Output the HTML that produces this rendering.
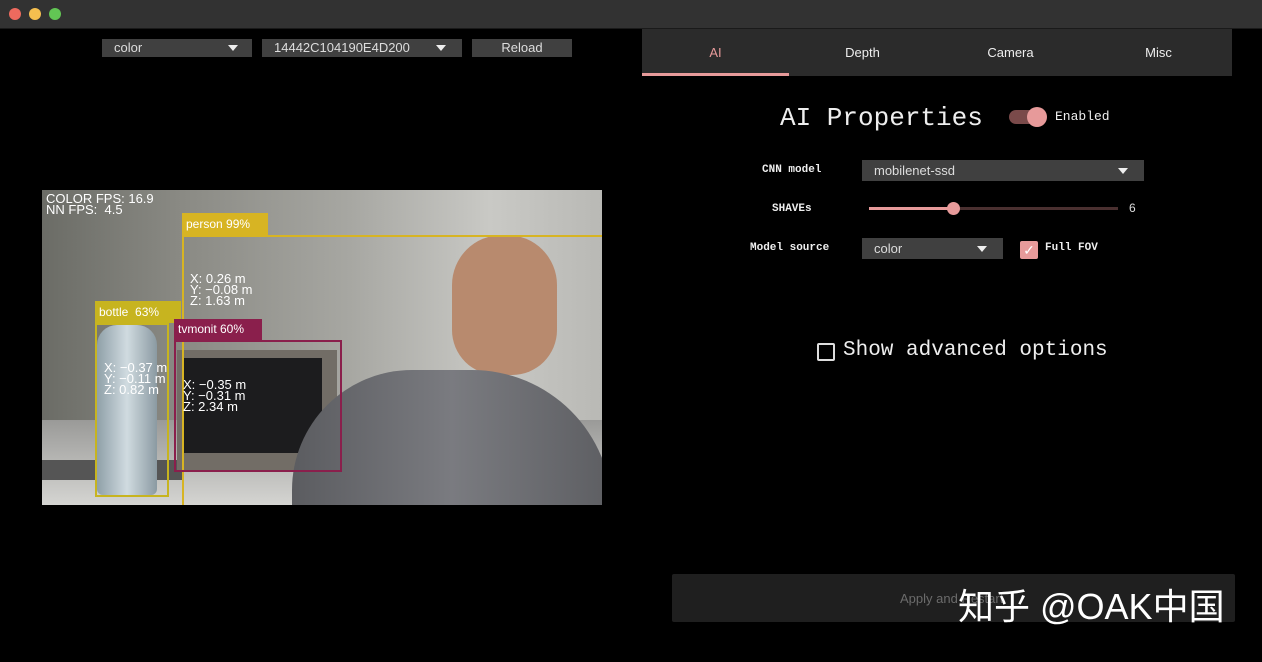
<!DOCTYPE html>
<html><head><meta charset="utf-8"><style>
body{margin:0;width:1262px;height:662px;background:#000;overflow:hidden;position:relative;font-family:"Liberation Sans",sans-serif}
.abs{position:absolute}
.tb{left:0;top:0;width:1262px;height:28px;background:#323232;border-bottom:1px solid #1a1a1a}
.dot{top:8px;width:12px;height:12px;border-radius:50%}
.sel{background:#404040;color:#ddd;font-size:13px;line-height:18px;padding-left:12px;box-sizing:border-box}
.tri{position:absolute;width:0;height:0;border-left:5px solid transparent;border-right:5px solid transparent;border-top:6px solid #eee;top:6px}
.mono{font-family:"Liberation Mono",monospace;color:#eee}
.lbl{font-family:"Liberation Mono",monospace;font-weight:bold;font-size:11px;color:#eee}
.ov{font-family:"Liberation Sans",sans-serif;font-size:13px;color:#fff;line-height:11px}
</style></head><body>
<div class="abs tb"></div>
<div class="abs dot" style="left:9px;background:#ed6a5e"></div>
<div class="abs dot" style="left:29px;background:#f5bf4f"></div>
<div class="abs dot" style="left:49px;background:#62c554"></div>

<div class="abs sel" style="left:102px;top:39px;width:150px;height:18px">color<span class="tri" style="left:126px"></span></div>
<div class="abs sel" style="left:262px;top:39px;width:200px;height:18px">14442C104190E4D200<span class="tri" style="left:174px"></span></div>
<div class="abs sel" style="left:472px;top:39px;width:100px;height:18px;text-align:center;padding:0">Reload</div>

<div class="abs" style="left:42px;top:190px;width:560px;height:315px;overflow:hidden;background:linear-gradient(90deg,#6b6c66 0%,#8a8a84 25%,#a7a7a2 55%,#c9c9c5 80%,#b9b9b5 100%)">
 <div class="abs" style="left:0;top:230px;width:560px;height:85px;background:linear-gradient(#9a9a98,#d5d5d2)"></div>
 <div class="abs" style="left:0;top:270px;width:140px;height:20px;background:#555"></div>
 <div class="abs" style="left:135px;top:160px;width:160px;height:120px;background:#726d66"></div>
 <div class="abs" style="left:140px;top:168px;width:140px;height:95px;background:#1c1c1e"></div>
 <div class="abs" style="left:55px;top:135px;width:60px;height:170px;border-radius:20px 20px 6px 6px;background:linear-gradient(90deg,#8fa0a8,#d0dbe0,#8b9aa2)"></div>
 <div class="abs" style="left:410px;top:45px;width:105px;height:140px;border-radius:50px 50px 45px 45px;background:#b88a6e"></div>
 <div class="abs" style="left:250px;top:180px;width:320px;height:150px;border-radius:120px 140px 0 0;background:linear-gradient(90deg,#5b5c60,#7a7b80,#5d5e62)"></div>
 <div class="abs" style="left:140px;top:45px;width:418px;height:268px;border:2px solid #d7b423"></div>
 <div class="abs" style="left:140px;top:23px;width:86px;height:22px;background:#d7b423;color:#fff;font-size:12px;line-height:22px;padding-left:4px;box-sizing:border-box">person 99%</div>
 <div class="abs" style="left:53px;top:133px;width:70px;height:170px;border:2px solid #c7b41f"></div>
 <div class="abs" style="left:53px;top:111px;width:86px;height:22px;background:#c7b41f;color:#fff;font-size:12px;line-height:22px;padding-left:4px;box-sizing:border-box">bottle &nbsp;63%</div>
 <div class="abs" style="left:132px;top:150px;width:164px;height:128px;border:2px solid #8a1f4c"></div>
 <div class="abs" style="left:132px;top:129px;width:88px;height:21px;background:#8a1f4c;color:#fff;font-size:12px;line-height:21px;padding-left:4px;box-sizing:border-box">tvmonit 60%</div>
 <div class="abs ov" style="left:4px;top:3px">COLOR FPS: 16.9<br>NN FPS: &nbsp;4.5</div>
 <div class="abs ov" style="left:148px;top:83px">X: 0.26 m<br>Y: −0.08 m<br>Z: 1.63 m</div>
 <div class="abs ov" style="left:62px;top:172px">X: −0.37 m<br>Y: −0.11 m<br>Z: 0.82 m</div>
 <div class="abs ov" style="left:141px;top:189px">X: −0.35 m<br>Y: −0.31 m<br>Z: 2.34 m</div>
</div>

<div class="abs" style="left:642px;top:29px;width:590px;height:47px;background:#2b2b2b"></div>
<div class="abs" style="left:642px;top:73px;width:147px;height:3px;background:#e79a9a"></div>
<div class="abs" style="left:642px;top:45px;width:147px;text-align:center;color:#e79a9a;font-size:13px">AI</div>
<div class="abs" style="left:789px;top:45px;width:147px;text-align:center;color:#eee;font-size:13px">Depth</div>
<div class="abs" style="left:937px;top:45px;width:147px;text-align:center;color:#eee;font-size:13px">Camera</div>
<div class="abs" style="left:1085px;top:45px;width:147px;text-align:center;color:#eee;font-size:13px">Misc</div>

<div class="abs mono" style="left:780px;top:103px;font-size:26px">AI Properties</div>
<div class="abs" style="left:1009px;top:110px;width:34px;height:14px;border-radius:7px;background:#7a4a4a"></div>
<div class="abs" style="left:1027px;top:107px;width:20px;height:20px;border-radius:50%;background:#e79a9a"></div>
<div class="abs lbl" style="left:1055px;top:109px;font-weight:normal;font-size:13px">Enabled</div>

<div class="abs lbl" style="left:762px;top:164px">CNN model</div>
<div class="abs sel" style="left:862px;top:160px;width:282px;height:21px;line-height:21px">mobilenet-ssd<span class="tri" style="left:256px;top:8px"></span></div>
<div class="abs lbl" style="left:772px;top:203px">SHAVEs</div>
<div class="abs" style="left:869px;top:207px;width:249px;height:3px;background:#4a3030"></div>
<div class="abs" style="left:869px;top:207px;width:85px;height:3px;background:#e79a9a"></div>
<div class="abs" style="left:947px;top:202px;width:13px;height:13px;border-radius:50%;background:#e79a9a"></div>
<div class="abs" style="left:1129px;top:201px;color:#ddd;font-size:12px">6</div>
<div class="abs lbl" style="left:750px;top:242px">Model source</div>
<div class="abs sel" style="left:862px;top:238px;width:141px;height:21px;line-height:21px">color<span class="tri" style="left:115px;top:8px"></span></div>
<div class="abs" style="left:1020px;top:241px;width:18px;height:18px;border-radius:2px;background:#e79a9a;color:#fff;font-size:14px;line-height:18px;text-align:center">✓</div>
<div class="abs lbl" style="left:1045px;top:242px">Full FOV</div>

<div class="abs" style="left:817px;top:343px;width:14px;height:14px;border:2px solid #ddd;border-radius:2px"></div>
<div class="abs mono" style="left:843px;top:339px;font-size:21px">Show advanced options</div>

<div class="abs" style="left:672px;top:574px;width:563px;height:48px;background:#1f1f1f;border-radius:2px"></div>
<div class="abs" style="left:900px;top:591px;color:#6b6b6b;font-size:13px">Apply and Restart</div>
<div class="abs" style="left:958px;top:587px;color:#fff;font-size:36px;line-height:40px;font-family:'Liberation Sans','Noto Sans CJK SC',sans-serif">知乎 @OAK中国</div>
</body></html>
